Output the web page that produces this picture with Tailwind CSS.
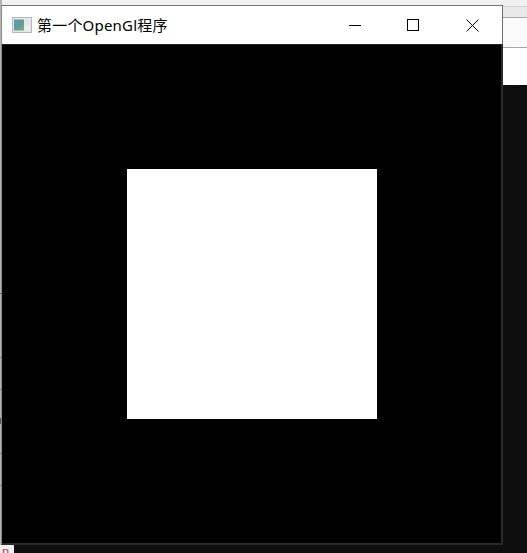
<!DOCTYPE html>
<html lang="zh">
<head>
  <meta charset="UTF-8">
  <title>第一个OpenGl程序</title>
  <script src="https://cdn.jsdelivr.net/npm/@tailwindcss/browser@4"></script>
</head>
<body class="bg-[#0e0e0e] overflow-hidden">
  <div class="relative w-[527px] h-[553px] overflow-hidden">
    <!-- editor behind the window -->
    <div class="flex flex-col h-[85px]">
      <div class="h-[6px] bg-[#f2f2f2] shrink-0"></div>
      <div class="h-[1px] bg-[#d2d2da] shrink-0"></div>
      <div class="h-[10px] bg-[#e9e9e9] shrink-0"></div>
      <div class="h-[31px] shrink-0 bg-linear-to-r from-[#d4d4d4] to-[#fafafa] border-y border-[#a8a8a8]"></div>
      <div class="flex-1 bg-linear-to-r from-[#e0e0e0] via-[#fbfbfb] to-white"></div>
    </div>

    <!-- strip left of the window, with its small marks -->
    <div class="absolute left-0 top-0 w-[2px] h-[545px] bg-[#b4b4b4]">
      <div class="absolute top-[293px] w-[2px] h-[1px] bg-[#555555]"></div>
      <div class="absolute top-[357px] w-[2px] h-[1px] bg-[#b0603a]"></div>
      <div class="absolute top-[389px] w-[2px] h-[1px] bg-[#b0603a]"></div>
      <div class="absolute top-[418px] w-[2px] h-[6px] bg-[#3f5f80]"></div>
      <div class="absolute top-[453px] w-[2px] h-[1px] bg-[#b0603a]"></div>
      <div class="absolute top-[485px] w-[2px] h-[1px] bg-[#b0603a]"></div>
    </div>

    <!-- tab peeking out at the bottom -->
    <div class="absolute left-0 top-[545px] w-[14px] h-[8px] bg-[#efefef] overflow-hidden text-[13px] leading-[14px] text-[#c83a5a] font-['Liberation_Sans',sans-serif] pl-[2px]">n</div>
    <div class="absolute left-[11px] top-[544px] w-[3px] h-[1px] bg-[#b03050]"></div>

    <!-- window -->
    <div class="absolute left-[1px] top-[5px] w-[502px] h-[540px] flex flex-col border-t border-[#777777] border-l border-l-[#8a8a8a] border-r border-r-[#2a2a2a] border-b border-b-[#2a2a2a]">
      <div class="relative h-[38px] bg-white flex items-center shrink-0">
        <svg class="ml-[10px] w-[20px] h-[16px]" viewBox="0 0 20 16">
          <defs>
            <linearGradient id="pane" x1="0" y1="0" x2="1" y2="1">
              <stop offset="0" stop-color="#6c8fc0"/>
              <stop offset="0.55" stop-color="#5f9e90"/>
              <stop offset="1" stop-color="#7fb58a"/>
            </linearGradient>
          </defs>
          <rect x="0.5" y="0.5" width="19" height="15" fill="#e6e8ea" stroke="#b4b8bc"/>
          <rect x="2" y="2.5" width="10" height="11" fill="url(#pane)"/>
          <rect x="13" y="2.5" width="5" height="5" fill="#dcebe4"/>
          <rect x="13" y="8.5" width="5" height="5" fill="#f0f2f2"/>
        </svg>
        <span class="ml-[5px] text-[15px] tracking-[0.2px] text-black font-['Noto_Sans','Noto_Sans_CJK_SC',sans-serif]">第一个OpenGl程序</span>
        <div class="ml-auto flex items-center">
          <svg class="w-[12px] h-[12px]" viewBox="0 0 12 12"><path d="M0 6.5H12" stroke="#000" fill="none"/></svg>
          <svg class="ml-[46px] w-[12px] h-[12px]" viewBox="0 0 12 12"><rect x="0.5" y="0.5" width="11" height="11" stroke="#000" fill="none"/></svg>
          <svg class="ml-[47px] mr-[23px] w-[13px] h-[13px]" viewBox="0 0 13 13"><path d="M0.5 0.5L12.5 12.5M12.5 0.5L0.5 12.5" stroke="#000" fill="none"/></svg>
        </div>
        <div class="absolute right-[-1px] top-0 w-[1px] h-[38px] bg-[#707070]"></div>
      </div>
      <div class="flex-1 bg-black shadow-[inset_-1px_-1px_0_#2a2a2a,inset_0_1px_0_#222222] flex items-center justify-center">
        <div class="w-[250px] h-[250px] bg-white"></div>
      </div>
    </div>
  </div>
</body>
</html>
